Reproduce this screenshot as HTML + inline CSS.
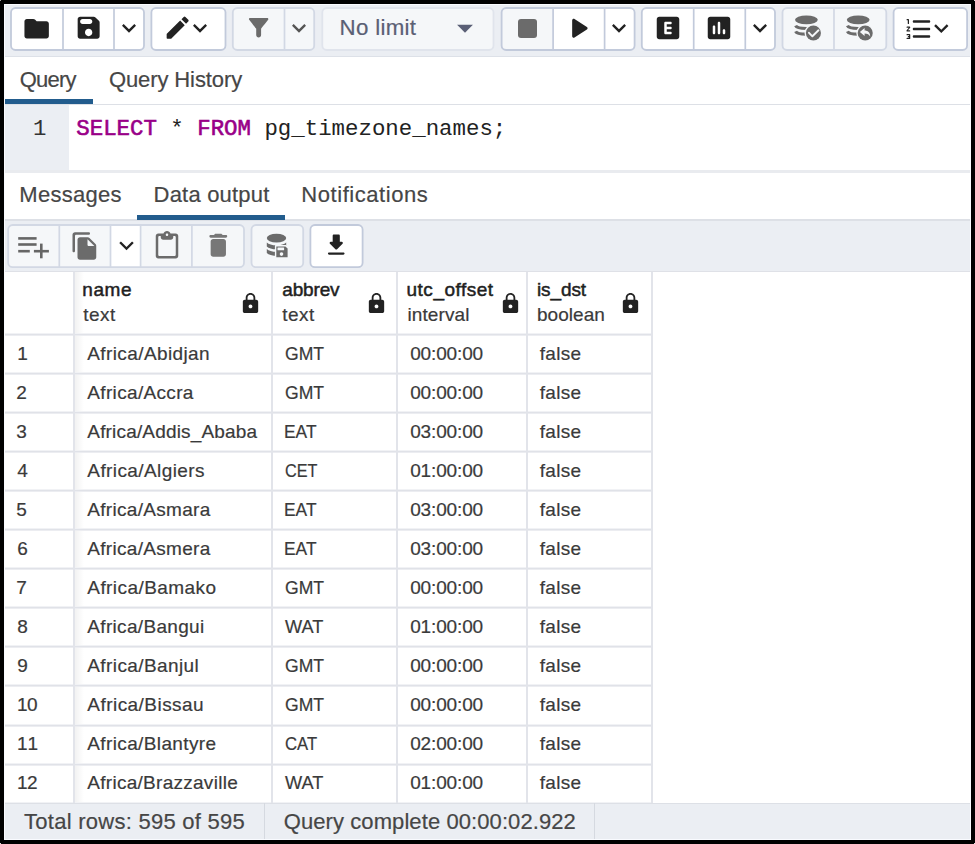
<!DOCTYPE html>
<html lang="en">
<head>
<meta charset="utf-8">
<title>Query Tool</title>
<style>
*{box-sizing:border-box;margin:0;padding:0}
html,body{width:975px;height:844px;overflow:hidden;background:#000}
body{position:relative;font-family:"Liberation Sans",sans-serif;color:#222}
#app{position:absolute;left:4px;top:4px;width:967px;height:836px;background:#fff;overflow:hidden}
.abs{position:absolute}
.bar{position:absolute;left:0;width:967px;background:#ebeef3}
svg{position:absolute;overflow:visible}
.t{position:absolute;white-space:nowrap;line-height:1;-webkit-text-stroke:.2px currentColor}
.code{font-family:"Liberation Mono",monospace;font-size:22.400px;-webkit-text-stroke:0}
.kw{color:#908;-webkit-text-stroke:.6px #908}
/* table */
.vl{position:absolute;width:2px;background:#e2e4ea;top:268px;height:531px}
.hl{position:absolute;height:3px;background:linear-gradient(#f1f2f5 0 33.3%,#e0e2e8 33.3% 66.7%,#ecedf1 66.7% 100%);left:0;width:649px}
.sh{position:absolute;left:71px;top:268px;width:9px;height:531px;background:linear-gradient(to right,rgba(0,0,0,.05),rgba(0,0,0,0))}
</style>
</head>
<body>
<div id="app">

<!-- main toolbar -->
<div class="bar" id="tb1" style="top:0;height:53px;border-bottom:1px solid #dde1e8"></div>
<svg style="left:-4px;top:-4px" width="975" height="300"><clipPath id="c110_8"><rect x="11" y="8" width="133" height="42" rx="4.500"/></clipPath><rect x="11" y="8" width="133" height="42" rx="4.500" fill="#fff"/><line x1="63" y1="8" x2="63" y2="50" stroke="#c2cadb" stroke-width="1.700"/><line x1="114" y1="8" x2="114" y2="50" stroke="#c2cadb" stroke-width="1.700"/><rect x="11" y="8" width="133" height="42" rx="4.500" fill="none" stroke="#c2cadb" stroke-width="1.800"/></svg>
<svg style="left:17.95px;top:9.65px" width="29.3" height="29.3" viewBox="0 0 24 24" fill="#222"><path d="M10.59 4.59C10.21 4.21 9.7 4 9.17 4H4c-1.1 0-1.99.9-1.99 2L2 18c0 1.1.9 2 2 2h16c1.1 0 2-.9 2-2V8c0-1.1-.9-2-2-2h-8l-1.41-1.41z"/></svg>
<svg style="left:69.65px;top:9.45px" width="29.3" height="29.3" viewBox="0 0 24 24" fill="#222"><path d="M17.59 3.59c-.38-.38-.89-.59-1.42-.59H5c-1.11 0-2 .9-2 2v14c0 1.1.9 2 2 2h14c1.1 0 2-.9 2-2V7.83c0-.53-.21-1.04-.59-1.41l-2.82-2.83zM12 19c-1.66 0-3-1.34-3-3s1.34-3 3-3 3 1.34 3 3-1.34 3-3 3zm1-10H7c-1.1 0-2-.9-2-2s.9-2 2-2h6c1.1 0 2 .9 2 2s-.9 2-2 2z"/></svg>
<svg style="left:111.3px;top:9.95px" width="28" height="28" viewBox="0 0 24 24" fill="#222"><path d="M7.41 8.59 12 13.17l4.59-4.58L18 10l-6 6-6-6 1.41-1.41z"/></svg>
<svg style="left:-4px;top:-4px" width="975" height="300"><clipPath id="c1514_8"><rect x="151.4" y="8" width="74.1" height="42" rx="4.500"/></clipPath><rect x="151.4" y="8" width="74.1" height="42" rx="4.500" fill="#fff"/><rect x="151.4" y="8" width="74.1" height="42" rx="4.500" fill="none" stroke="#c2cadb" stroke-width="1.800"/></svg>
<svg style="left:158.65px;top:9.45px" width="29.3" height="29.3" viewBox="0 0 24 24" fill="#222"><path d="M3 17.46v3.04c0 .28.22.5.5.5h3.04c.13 0 .26-.05.35-.15L17.81 9.94l-3.75-3.75L3.15 17.1c-.1.1-.15.22-.15.36zM20.71 7.04c.39-.39.39-1.02 0-1.41l-2.34-2.34a.9959.9959 0 0 0-1.41 0l-1.83 1.83 3.75 3.75 1.83-1.83z"/></svg>
<svg style="left:181.5px;top:9.95px" width="28" height="28" viewBox="0 0 24 24" fill="#222"><path d="M7.41 8.59 12 13.17l4.59-4.58L18 10l-6 6-6-6 1.41-1.41z"/></svg>
<svg style="left:-4px;top:-4px" width="975" height="300"><clipPath id="c2328_8"><rect x="232.8" y="8" width="81.4" height="42" rx="4.500"/></clipPath><rect x="232.8" y="8" width="81.4" height="42" rx="4.500" fill="#f5f7f9"/><line x1="284.5" y1="8" x2="284.5" y2="50" stroke="#d2d8e4" stroke-width="1.700"/><rect x="232.8" y="8" width="81.4" height="42" rx="4.500" fill="none" stroke="#d2d8e4" stroke-width="1.800"/></svg>
<svg style="left:240.15px;top:8.85px" width="29.3" height="29.3" viewBox="0 0 24 24" fill="#6b6b6b"><path d="M4.25 5.61C6.57 8.59 10 13 10 13v5c0 1.1.9 2 2 2s2-.9 2-2v-5s3.43-4.41 5.75-7.39c.51-.66.04-1.61-.8-1.61H5.04c-.83 0-1.3.95-.79 1.61z"/></svg>
<svg style="left:281.0px;top:9.95px" width="28" height="28" viewBox="0 0 24 24" fill="#555"><path d="M7.41 8.59 12 13.17l4.59-4.58L18 10l-6 6-6-6 1.41-1.41z"/></svg>
<svg style="left:-4px;top:-4px" width="975" height="300"><clipPath id="c3223_8"><rect x="322.3" y="8" width="171.2" height="42" rx="4.500"/></clipPath><rect x="322.3" y="8" width="171.2" height="42" rx="4.500" fill="#f5f7f9"/><rect x="322.3" y="8" width="171.2" height="42" rx="4.500" fill="none" stroke="#e0e4ec" stroke-width="1.800"/></svg>
<svg style="left:441.9px;top:5.4px" width="38" height="38" viewBox="0 0 24 24" fill="#5a5f76"><path d="M7 10l5 5 5-5z"/></svg>
<svg style="left:-4px;top:-4px" width="975" height="300"><clipPath id="c5016_8"><rect x="501.6" y="8" width="133.0" height="42" rx="4.500"/></clipPath><rect x="501.6" y="8" width="133.0" height="42" rx="4.500" fill="#fff"/><rect x="501.6" y="8" width="51.5" height="42" fill="#f5f7f9" clip-path="url(#c5016_8)"/><line x1="553.1" y1="8" x2="553.1" y2="50" stroke="#c2cadb" stroke-width="1.700"/><line x1="604.6" y1="8" x2="604.6" y2="50" stroke="#c2cadb" stroke-width="1.700"/><rect x="501.6" y="8" width="133.0" height="42" rx="4.500" fill="none" stroke="#c2cadb" stroke-width="1.800"/></svg>
<div class="abs" style="left:514.2px;top:15.3px;width:18.6px;height:18.6px;border-radius:3px;background:#6b6b6b"></div>
<svg style="left:556.05px;top:6.25px" width="36.5" height="36.5" viewBox="0 0 24 24" fill="#222"><path d="M8 6.82v10.36c0 .79.87 1.27 1.54.84l8.14-5.18c.62-.39.62-1.29 0-1.69L9.54 5.98C8.87 5.55 8 6.03 8 6.82z"/></svg>
<svg style="left:601.4px;top:9.95px" width="28" height="28" viewBox="0 0 24 24" fill="#222"><path d="M7.41 8.59 12 13.17l4.59-4.58L18 10l-6 6-6-6 1.41-1.41z"/></svg>
<svg style="left:-4px;top:-4px" width="975" height="300"><clipPath id="c6418_8"><rect x="641.8" y="8" width="133.2" height="42" rx="4.500"/></clipPath><rect x="641.8" y="8" width="133.2" height="42" rx="4.500" fill="#fff"/><line x1="693.7" y1="8" x2="693.7" y2="50" stroke="#c2cadb" stroke-width="1.700"/><line x1="745.3" y1="8" x2="745.3" y2="50" stroke="#c2cadb" stroke-width="1.700"/><rect x="641.8" y="8" width="133.2" height="42" rx="4.500" fill="none" stroke="#c2cadb" stroke-width="1.800"/></svg>
<svg style="left:648.7px;top:9.3px" width="30" height="30" viewBox="0 0 24 24" fill="#222"><path d="M19 3H5c-1.1 0-2 .9-2 2v14c0 1.1.9 2 2 2h14c1.1 0 2-.9 2-2V5c0-1.1-.9-2-2-2zm-5 6h-3v2h3c.55 0 1 .45 1 1s-.45 1-1 1h-3v2h3c.55 0 1 .45 1 1s-.45 1-1 1h-4c-.55 0-1-.45-1-1V8c0-.55.45-1 1-1h4c.55 0 1 .45 1 1s-.45 1-1 1z"/></svg>
<svg style="left:700.3px;top:9.3px" width="30" height="30" viewBox="0 0 24 24" fill="#222"><path d="M19 3H5c-1.1 0-2 .9-2 2v14c0 1.1.9 2 2 2h14c1.1 0 2-.9 2-2V5c0-1.1-.9-2-2-2zM8 17c-.55 0-1-.45-1-1v-5c0-.55.45-1 1-1s1 .45 1 1v5c0 .55-.45 1-1 1zm4 0c-.55 0-1-.45-1-1V8c0-.55.45-1 1-1s1 .45 1 1v8c0 .55-.45 1-1 1zm4 0c-.55 0-1-.45-1-1v-2c0-.55.45-1 1-1s1 .45 1 1v2c0 .55-.45 1-1 1z"/></svg>
<svg style="left:742.2px;top:9.95px" width="28" height="28" viewBox="0 0 24 24" fill="#222"><path d="M7.41 8.59 12 13.17l4.59-4.58L18 10l-6 6-6-6 1.41-1.41z"/></svg>
<svg style="left:-4px;top:-4px" width="975" height="300"><clipPath id="c7825_8"><rect x="782.5" y="8" width="103.8" height="42" rx="4.500"/></clipPath><rect x="782.5" y="8" width="103.8" height="42" rx="4.500" fill="#f5f7f9"/><line x1="834" y1="8" x2="834" y2="50" stroke="#d2d8e4" stroke-width="1.700"/><rect x="782.5" y="8" width="103.8" height="42" rx="4.500" fill="none" stroke="#d2d8e4" stroke-width="1.800"/></svg>
<svg style="left:-4px;top:-4px" width="975" height="300"><ellipse cx="806.4" cy="19.850" rx="11.400" ry="4.450" fill="#6b6b6b"/><path d="M795.6 25.600A10.900 3.300 0 0 0 817.2 25.600" fill="none" stroke="#6b6b6b" stroke-width="3.100"/><path d="M795.6 31.300A10.900 3.300 0 0 0 817.2 31.300" fill="none" stroke="#6b6b6b" stroke-width="3.100"/><circle cx="813.4" cy="33" r="8.900" fill="#f5f7f9"/><circle cx="813.4" cy="33" r="7.550" fill="#6b6b6b"/><path d="M809 32.800l3.400 3.500 6.100-6" fill="none" stroke="#f5f7f9" stroke-width="1.900" stroke-linecap="round" stroke-linejoin="round"/></svg>
<svg style="left:-4px;top:-4px" width="975" height="300"><ellipse cx="858.1999999999999" cy="19.850" rx="11.400" ry="4.450" fill="#6b6b6b"/><path d="M847.4 25.600A10.900 3.300 0 0 0 869.0 25.600" fill="none" stroke="#6b6b6b" stroke-width="3.100"/><path d="M847.4 31.300A10.900 3.300 0 0 0 869.0 31.300" fill="none" stroke="#6b6b6b" stroke-width="3.100"/><circle cx="865.2" cy="33" r="8.900" fill="#f5f7f9"/><circle cx="865.2" cy="33" r="7.550" fill="#6b6b6b"/><path transform="translate(865.200 33)" d="M-5.300-1L-.6-4.900V-2.400C2.600-2.400 5-.4 5 3.700 4 1.400 2.200.5-.6.500V2.900Z" fill="#f5f7f9"/></svg>
<svg style="left:-4px;top:-4px" width="975" height="300"><clipPath id="c8936_8"><rect x="893.6" y="8" width="73.5" height="42" rx="4.500"/></clipPath><rect x="893.6" y="8" width="73.5" height="42" rx="4.500" fill="#fff"/><rect x="893.6" y="8" width="73.5" height="42" rx="4.500" fill="none" stroke="#c2cadb" stroke-width="1.800"/></svg>
<svg style="left:900.4px;top:9.55px" width="30" height="30" viewBox="0 0 24 24" fill="#222"><path d="M8 7h12c.55 0 1-.45 1-1s-.45-1-1-1H8c-.55 0-1 .45-1 1s.45 1 1 1zm12 10H8c-.55 0-1 .45-1 1s.45 1 1 1h12c.55 0 1-.45 1-1s-.45-1-1-1zm0-6H8c-.55 0-1 .45-1 1s.45 1 1 1h12c.55 0 1-.45 1-1s-.45-1-1-1zM4.5 16h-2c-.28 0-.5.22-.5.5s.22.5.5.5H4v.5h-.5c-.28 0-.5.22-.5.5s.22.5.5.5H4v.5H2.5c-.28 0-.5.22-.5.5s.22.5.5.5h2c.28 0 .5-.22.5-.5v-3c0-.28-.22-.5-.5-.5zm-2-11H3v2.5c0 .28.22.5.5.5s.5-.22.5-.5v-3c0-.28-.22-.5-.5-.5h-1c-.28 0-.5.22-.5.5s.22.5.5.5zm2 5h-2c-.28 0-.5.22-.5.5s.22.5.5.5h1.3l-1.68 1.96c-.08.09-.12.21-.12.32v.22c0 .28.22.5.5.5h2c.28 0 .5-.22.5-.5s-.22-.5-.5-.5H3.2l1.68-1.96c.08-.09.12-.21.12-.32v-.22c0-.28-.22-.5-.5-.5z"/></svg>
<svg style="left:922.9px;top:10.0px" width="28.6" height="28.6" viewBox="0 0 24 24" fill="#222"><path d="M7.41 8.59 12 13.17l4.59-4.58L18 10l-6 6-6-6 1.41-1.41z"/></svg>

<!-- query tabs -->
<div class="abs" style="left:0;top:100px;width:967px;height:1px;background:#dde0e6"></div>
<div class="abs" style="left:0;top:95px;width:89px;height:5px;background:#225c8d"></div>

<!-- editor -->
<div class="abs" style="left:0;top:101px;width:65px;height:65px;background:#ebeef3"></div>
<div class="t code" style="left:29px;top:114px;color:#333">1</div>
<div class="t code" style="left:72.300px;top:114px;color:#222"><span class="kw">SELECT</span> * <span class="kw">FROM</span> pg_timezone_names;</div>
<div class="abs" style="left:0;top:166px;width:967px;height:3px;background:#e9ebef"></div>

<!-- result tabs -->

<!-- data toolbar -->
<div class="bar" id="tb2" style="top:215px;height:53px;border-top:2px solid #dde0e6;border-bottom:1px solid #dfe1e7"></div>
<div class="abs" style="left:133px;top:211px;width:148px;height:5px;background:#225c8d"></div>
<svg style="left:-4px;top:-4px" width="975" height="300"><clipPath id="c82_225"><rect x="8.2" y="225" width="235.8" height="42.2" rx="4.500"/></clipPath><rect x="8.2" y="225" width="235.8" height="42.2" rx="4.500" fill="#f5f7f9"/><rect x="110.5" y="225" width="30.1" height="42.2" fill="#fff" clip-path="url(#c82_225)"/><line x1="59.3" y1="225" x2="59.3" y2="267.2" stroke="#d2d8e4" stroke-width="1.700"/><line x1="110.5" y1="225" x2="110.5" y2="267.2" stroke="#d2d8e4" stroke-width="1.700"/><line x1="140.6" y1="225" x2="140.6" y2="267.2" stroke="#d2d8e4" stroke-width="1.700"/><line x1="191.9" y1="225" x2="191.9" y2="267.2" stroke="#d2d8e4" stroke-width="1.700"/><rect x="8.2" y="225" width="235.8" height="42.2" rx="4.500" fill="none" stroke="#d2d8e4" stroke-width="1.800"/></svg>
<svg style="left:0;top:0" width="60" height="280"><line x1="14.2" y1="234.4" x2="32.6" y2="234.4" stroke="#666" stroke-width="2.6"/><line x1="14.2" y1="240.5" x2="32.6" y2="240.5" stroke="#666" stroke-width="2.6"/><line x1="14.2" y1="247.2" x2="25.8" y2="247.2" stroke="#666" stroke-width="2.6"/><line x1="37.3" y1="239.6" x2="37.3" y2="254.3" stroke="#666" stroke-width="2.6"/><line x1="29.9" y1="247.2" x2="44.9" y2="247.2" stroke="#666" stroke-width="2.6"/></svg>
<svg style="left:66.4px;top:226.5px" width="30" height="30" viewBox="0 0 24 24" fill="#6b6b6b"><path d="M15 1H4c-1.1 0-2 .9-2 2v13c0 .55.45 1 1 1s1-.45 1-1V4c0-.55.45-1 1-1h10c.55 0 1-.45 1-1s-.45-1-1-1zm.59 4.59 4.83 4.83c.37.37.58.88.58 1.41V21c0 1.1-.9 2-2 2H7.99C6.89 23 6 22.1 6 21l.01-14c0-1.1.89-2 1.99-2h6.17c.53 0 1.04.21 1.42.59zM15 12h4.5L14 6.5V11c0 .55.45 1 1 1z"/></svg>
<svg style="left:107.6px;top:227.2px" width="29" height="29" viewBox="0 0 24 24" fill="#222"><path d="M7.41 8.59 12 13.17l4.59-4.58L18 10l-6 6-6-6 1.41-1.41z"/></svg>
<svg style="left:147.9px;top:226.5px" width="30" height="30" viewBox="0 0 24 24" fill="#6b6b6b"><path d="M19 2h-4.18C14.4.84 13.3 0 12 0S9.6.84 9.18 2H5c-1.1 0-2 .9-2 2v16c0 1.1.9 2 2 2h14c1.1 0 2-.9 2-2V4c0-1.1-.9-2-2-2zm-7 0c.55 0 1 .45 1 1s-.45 1-1 1-1-.45-1-1 .45-1 1-1zm6 18H6c-.55 0-1-.45-1-1V5c0-.55.45-1 1-1h1v1c0 1.1.9 2 2 2h6c1.1 0 2-.9 2-2V4h1c.55 0 1 .45 1 1v14c0 .55-.45 1-1 1z"/></svg>
<svg style="left:199.1px;top:226.0px" width="30.6" height="30.6" viewBox="0 0 24 24" fill="#777"><path d="M6 19c0 1.1.9 2 2 2h8c1.1 0 2-.9 2-2V9c0-1.1-.9-2-2-2H8c-1.1 0-2 .9-2 2v10zM18 4h-2.5l-.71-.71c-.18-.18-.44-.29-.7-.29H9.910c-.26 0-.52.11-.7.29L8.500 4H6c-.55 0-1 .45-1 1s.45 1 1 1h12c.55 0 1-.45 1-1s-.45-1-1-1z"/></svg>
<svg style="left:-4px;top:-4px" width="975" height="300"><clipPath id="c2515_225"><rect x="251.5" y="225" width="51.7" height="42.2" rx="4.500"/></clipPath><rect x="251.5" y="225" width="51.7" height="42.2" rx="4.500" fill="#f5f7f9"/><rect x="251.5" y="225" width="51.7" height="42.2" rx="4.500" fill="none" stroke="#d2d8e4" stroke-width="1.800"/></svg>
<svg style="left:-4px;top:-4px" width="975" height="300"><ellipse cx="276.500" cy="238.100" rx="9.700" ry="4.300" fill="#6b6b6b"/><path d="M266.800 242.400c1.800 1.900 5.400 2.800 9.700 2.800s7.900-.9 9.700-2.800v4.100c-1.800 1.900-5.400 2.800-9.700 2.800s-7.900-.9-9.700-2.800z" fill="#6b6b6b"/><path d="M266.800 248.900c1.800 1.900 5.400 2.800 9.700 2.800s7.900-.9 9.700-2.800v4.100c-1.800 1.900-5.400 2.800-9.700 2.800s-7.900-.9-9.700-2.800z" fill="#6b6b6b"/><path d="M275.600 245.700h10.100l2.600 2.600v9.700h-12.700z" fill="#6b6b6b" stroke="#f5f7f9" stroke-width="1.400" stroke-linejoin="round"/><rect x="277.500" y="247.500" width="6.600" height="2.700" rx=".5" fill="#f5f7f9"/><circle cx="281.500" cy="254.100" r="1.800" fill="#f5f7f9"/></svg>
<svg style="left:-4px;top:-4px" width="975" height="300"><clipPath id="c3104_225"><rect x="310.4" y="225" width="52.2" height="42.2" rx="4.500"/></clipPath><rect x="310.4" y="225" width="52.2" height="42.2" rx="4.500" fill="#fff"/><rect x="310.4" y="225" width="52.2" height="42.2" rx="4.500" fill="none" stroke="#c2cadb" stroke-width="1.800"/></svg>
<svg style="left:318.45px;top:226.85px" width="28.5" height="28.5" viewBox="0 0 24 24" fill="#222"><path d="M16.59 9H15V4c0-.55-.45-1-1-1h-4c-.55 0-1 .45-1 1v5H7.41c-.89 0-1.34 1.08-.71 1.71l4.59 4.59c.39.39 1.02.39 1.41 0l4.59-4.59c.63-.63.19-1.71-.7-1.71zM5 19c0 .55.45 1 1 1h12c.55 0 1-.45 1-1s-.45-1-1-1H6c-.55 0-1 .45-1 1z"/></svg>

<!-- table -->
<div class="sh"></div>
<div class="hl" style="top:329px"></div>
<div class="hl" style="top:368px"></div>
<div class="hl" style="top:407px"></div>
<div class="hl" style="top:446px"></div>
<div class="hl" style="top:485px"></div>
<div class="hl" style="top:524px"></div>
<div class="hl" style="top:563px"></div>
<div class="hl" style="top:602px"></div>
<div class="hl" style="top:641px"></div>
<div class="hl" style="top:680px"></div>
<div class="hl" style="top:720px"></div>
<div class="hl" style="top:759px"></div>
<div class="hl" style="top:798px"></div>
<div class="vl" style="left:69px"></div>
<div class="vl" style="left:267px"></div>
<div class="vl" style="left:392px"></div>
<div class="vl" style="left:522px"></div>
<div class="vl" style="left:647px"></div>
<svg style="left:235.25px;top:288.3px" width="23" height="23" viewBox="0 0 24 24" fill="#222"><path d="M18 8h-1V6c0-2.76-2.24-5-5-5S7 3.240 7 6v2H6c-1.1 0-2 .9-2 2v10c0 1.1.9 2 2 2h12c1.100 0 2-.9 2-2V10c0-1.100-.9-2-2-2zm-6 9c-1.100 0-2-.9-2-2s.9-2 2-2 2 .9 2 2-.9 2-2 2zm3.100-9H8.900V6c0-1.710 1.390-3.100 3.100-3.100 1.710 0 3.100 1.390 3.100 3.100v2z"/></svg>
<svg style="left:360.5px;top:288.3px" width="23" height="23" viewBox="0 0 24 24" fill="#222"><path d="M18 8h-1V6c0-2.76-2.24-5-5-5S7 3.240 7 6v2H6c-1.1 0-2 .9-2 2v10c0 1.1.9 2 2 2h12c1.100 0 2-.9 2-2V10c0-1.100-.9-2-2-2zm-6 9c-1.100 0-2-.9-2-2s.9-2 2-2 2 .9 2 2-.9 2-2 2zm3.100-9H8.900V6c0-1.710 1.390-3.100 3.100-3.100 1.710 0 3.100 1.390 3.100 3.100v2z"/></svg>
<svg style="left:494.7px;top:288.3px" width="23" height="23" viewBox="0 0 24 24" fill="#222"><path d="M18 8h-1V6c0-2.76-2.24-5-5-5S7 3.240 7 6v2H6c-1.1 0-2 .9-2 2v10c0 1.1.9 2 2 2h12c1.100 0 2-.9 2-2V10c0-1.100-.9-2-2-2zm-6 9c-1.100 0-2-.9-2-2s.9-2 2-2 2 .9 2 2-.9 2-2 2zm3.100-9H8.900V6c0-1.710 1.390-3.100 3.100-3.100 1.710 0 3.100 1.390 3.100 3.100v2z"/></svg>
<svg style="left:615.0px;top:288.3px" width="23" height="23" viewBox="0 0 24 24" fill="#222"><path d="M18 8h-1V6c0-2.76-2.24-5-5-5S7 3.240 7 6v2H6c-1.1 0-2 .9-2 2v10c0 1.1.9 2 2 2h12c1.100 0 2-.9 2-2V10c0-1.100-.9-2-2-2zm-6 9c-1.100 0-2-.9-2-2s.9-2 2-2 2 .9 2 2-.9 2-2 2zm3.100-9H8.900V6c0-1.710 1.390-3.100 3.100-3.100 1.710 0 3.100 1.390 3.100 3.100v2z"/></svg>

<!-- status bar -->
<div class="bar" style="top:799px;height:37px;border-top:1px solid #dde0e6"></div>
<div class="abs" style="left:260px;top:799px;width:1px;height:37px;background:#d5d9e0"></div>
<div class="abs" style="left:590px;top:799px;width:1px;height:37px;background:#d5d9e0"></div>
<div class="t" style="left:15.8px;top:65px;font-size:22px;color:#464646;letter-spacing:-0.825px">Query</div>
<div class="t" style="left:104.9px;top:65px;font-size:22px;color:#464646;letter-spacing:-0.1px">Query History</div>
<div class="t" style="left:15.3px;top:180px;font-size:22px;color:#464646;letter-spacing:0.271px">Messages</div>
<div class="t" style="left:149.6px;top:180px;font-size:22px;color:#464646;letter-spacing:0.19px">Data output</div>
<div class="t" style="left:297.3px;top:180px;font-size:22px;color:#464646;letter-spacing:0.558px">Notifications</div>
<div class="t" style="left:20.0px;top:807px;font-size:22px;color:#464646;letter-spacing:0.267px">Total rows: 595 of 595</div>
<div class="t" style="left:279.7px;top:807px;font-size:22px;color:#464646;letter-spacing:0.088px">Query complete 00:00:02.922</div>
<div class="t" style="left:335.6px;top:13px;font-size:22.3px;color:#5b6074;letter-spacing:0.3px">No limit</div>
<div class="t" style="left:78.3px;top:276px;font-size:19px;color:#1f1f1f;-webkit-text-stroke:.5px #1f1f1f;letter-spacing:0.567px">name</div>
<div class="t" style="left:278.3px;top:276px;font-size:19px;color:#1f1f1f;-webkit-text-stroke:.5px #1f1f1f;letter-spacing:-0.16px">abbrev</div>
<div class="t" style="left:402.5px;top:276px;font-size:19px;color:#1f1f1f;-webkit-text-stroke:.5px #1f1f1f;letter-spacing:0.511px">utc_offset</div>
<div class="t" style="left:532.9px;top:276px;font-size:19px;color:#1f1f1f;-webkit-text-stroke:.5px #1f1f1f;letter-spacing:-0.08px">is_dst</div>
<div class="t" style="left:79.3px;top:301px;font-size:19px;color:#3a3a3a;letter-spacing:0.433px">text</div>
<div class="t" style="left:278.3px;top:301px;font-size:19px;color:#3a3a3a;letter-spacing:0.433px">text</div>
<div class="t" style="left:403.5px;top:301px;font-size:19px;color:#3a3a3a;letter-spacing:0.086px">interval</div>
<div class="t" style="left:532.9px;top:301px;font-size:19px;color:#3a3a3a;letter-spacing:0.067px">boolean</div>
<div class="t" style="left:13.2px;top:340px;font-size:19px;color:#3a3a3a">1</div>
<div class="t" style="left:83.3px;top:340px;font-size:19px;color:#3a3a3a;letter-spacing:0.392px">Africa/Abidjan</div>
<div class="t" style="left:281.3px;top:340px;font-size:19px;color:#3a3a3a;transform:scaleX(0.9262);transform-origin:0 0">GMT</div>
<div class="t" style="left:406.2px;top:340px;font-size:19px;color:#3a3a3a;letter-spacing:-0.143px">00:00:00</div>
<div class="t" style="left:535.8px;top:340px;font-size:19px;color:#3a3a3a;letter-spacing:0.275px">false</div>
<div class="t" style="left:12.3px;top:379px;font-size:19px;color:#3a3a3a">2</div>
<div class="t" style="left:83.3px;top:379px;font-size:19px;color:#3a3a3a;letter-spacing:0.336px">Africa/Accra</div>
<div class="t" style="left:281.3px;top:379px;font-size:19px;color:#3a3a3a;transform:scaleX(0.9262);transform-origin:0 0">GMT</div>
<div class="t" style="left:406.2px;top:379px;font-size:19px;color:#3a3a3a;letter-spacing:-0.143px">00:00:00</div>
<div class="t" style="left:535.8px;top:379px;font-size:19px;color:#3a3a3a;letter-spacing:0.275px">false</div>
<div class="t" style="left:12.3px;top:418px;font-size:19px;color:#3a3a3a">3</div>
<div class="t" style="left:83.3px;top:418px;font-size:19px;color:#3a3a3a;letter-spacing:0.171px">Africa/Addis_Ababa</div>
<div class="t" style="left:280.39px;top:418px;font-size:19px;color:#3a3a3a;transform:scaleX(0.9143);transform-origin:0 0">EAT</div>
<div class="t" style="left:406.2px;top:418px;font-size:19px;color:#3a3a3a;letter-spacing:-0.143px">03:00:00</div>
<div class="t" style="left:535.8px;top:418px;font-size:19px;color:#3a3a3a;letter-spacing:0.275px">false</div>
<div class="t" style="left:13.3px;top:457px;font-size:19px;color:#3a3a3a">4</div>
<div class="t" style="left:83.3px;top:457px;font-size:19px;color:#3a3a3a;letter-spacing:0.408px">Africa/Algiers</div>
<div class="t" style="left:281.3px;top:457px;font-size:19px;color:#3a3a3a;transform:scaleX(0.8526);transform-origin:0 0">CET</div>
<div class="t" style="left:406.2px;top:457px;font-size:19px;color:#3a3a3a;letter-spacing:-0.143px">01:00:00</div>
<div class="t" style="left:535.8px;top:457px;font-size:19px;color:#3a3a3a;letter-spacing:0.275px">false</div>
<div class="t" style="left:12.3px;top:496px;font-size:19px;color:#3a3a3a">5</div>
<div class="t" style="left:83.3px;top:496px;font-size:19px;color:#3a3a3a;letter-spacing:0.308px">Africa/Asmara</div>
<div class="t" style="left:280.39px;top:496px;font-size:19px;color:#3a3a3a;transform:scaleX(0.9143);transform-origin:0 0">EAT</div>
<div class="t" style="left:406.2px;top:496px;font-size:19px;color:#3a3a3a;letter-spacing:-0.143px">03:00:00</div>
<div class="t" style="left:535.8px;top:496px;font-size:19px;color:#3a3a3a;letter-spacing:0.275px">false</div>
<div class="t" style="left:13.3px;top:535px;font-size:19px;color:#3a3a3a">6</div>
<div class="t" style="left:83.3px;top:535px;font-size:19px;color:#3a3a3a;letter-spacing:0.308px">Africa/Asmera</div>
<div class="t" style="left:280.39px;top:535px;font-size:19px;color:#3a3a3a;transform:scaleX(0.9143);transform-origin:0 0">EAT</div>
<div class="t" style="left:406.2px;top:535px;font-size:19px;color:#3a3a3a;letter-spacing:-0.143px">03:00:00</div>
<div class="t" style="left:535.8px;top:535px;font-size:19px;color:#3a3a3a;letter-spacing:0.275px">false</div>
<div class="t" style="left:12.3px;top:574px;font-size:19px;color:#3a3a3a">7</div>
<div class="t" style="left:83.3px;top:574px;font-size:19px;color:#3a3a3a;letter-spacing:0.433px">Africa/Bamako</div>
<div class="t" style="left:281.3px;top:574px;font-size:19px;color:#3a3a3a;transform:scaleX(0.9262);transform-origin:0 0">GMT</div>
<div class="t" style="left:406.2px;top:574px;font-size:19px;color:#3a3a3a;letter-spacing:-0.143px">00:00:00</div>
<div class="t" style="left:535.8px;top:574px;font-size:19px;color:#3a3a3a;letter-spacing:0.275px">false</div>
<div class="t" style="left:13.3px;top:613px;font-size:19px;color:#3a3a3a">8</div>
<div class="t" style="left:83.3px;top:613px;font-size:19px;color:#3a3a3a;letter-spacing:0.325px">Africa/Bangui</div>
<div class="t" style="left:281.3px;top:613px;font-size:19px;color:#3a3a3a;transform:scaleX(0.9575);transform-origin:0 0">WAT</div>
<div class="t" style="left:406.2px;top:613px;font-size:19px;color:#3a3a3a;letter-spacing:-0.143px">01:00:00</div>
<div class="t" style="left:535.8px;top:613px;font-size:19px;color:#3a3a3a;letter-spacing:0.275px">false</div>
<div class="t" style="left:13.3px;top:652px;font-size:19px;color:#3a3a3a">9</div>
<div class="t" style="left:83.3px;top:652px;font-size:19px;color:#3a3a3a;letter-spacing:0.4px">Africa/Banjul</div>
<div class="t" style="left:281.3px;top:652px;font-size:19px;color:#3a3a3a;transform:scaleX(0.9262);transform-origin:0 0">GMT</div>
<div class="t" style="left:406.2px;top:652px;font-size:19px;color:#3a3a3a;letter-spacing:-0.143px">00:00:00</div>
<div class="t" style="left:535.8px;top:652px;font-size:19px;color:#3a3a3a;letter-spacing:0.275px">false</div>
<div class="t" style="left:13.0px;top:691px;font-size:19px;color:#3a3a3a;letter-spacing:-0.6px">10</div>
<div class="t" style="left:83.3px;top:691px;font-size:19px;color:#3a3a3a;letter-spacing:0.458px">Africa/Bissau</div>
<div class="t" style="left:281.3px;top:691px;font-size:19px;color:#3a3a3a;transform:scaleX(0.9262);transform-origin:0 0">GMT</div>
<div class="t" style="left:406.2px;top:691px;font-size:19px;color:#3a3a3a;letter-spacing:-0.143px">00:00:00</div>
<div class="t" style="left:535.8px;top:691px;font-size:19px;color:#3a3a3a;letter-spacing:0.275px">false</div>
<div class="t" style="left:13.0px;top:730px;font-size:19px;color:#3a3a3a;letter-spacing:1.4px">11</div>
<div class="t" style="left:83.3px;top:730px;font-size:19px;color:#3a3a3a;letter-spacing:0.371px">Africa/Blantyre</div>
<div class="t" style="left:281.3px;top:730px;font-size:19px;color:#3a3a3a;transform:scaleX(0.8757);transform-origin:0 0">CAT</div>
<div class="t" style="left:406.2px;top:730px;font-size:19px;color:#3a3a3a;letter-spacing:-0.143px">02:00:00</div>
<div class="t" style="left:535.8px;top:730px;font-size:19px;color:#3a3a3a;letter-spacing:0.275px">false</div>
<div class="t" style="left:13.0px;top:769px;font-size:19px;color:#3a3a3a;letter-spacing:-0.6px">12</div>
<div class="t" style="left:83.3px;top:769px;font-size:19px;color:#3a3a3a;letter-spacing:0.276px">Africa/Brazzaville</div>
<div class="t" style="left:281.3px;top:769px;font-size:19px;color:#3a3a3a;transform:scaleX(0.9575);transform-origin:0 0">WAT</div>
<div class="t" style="left:406.2px;top:769px;font-size:19px;color:#3a3a3a;letter-spacing:-0.143px">01:00:00</div>
<div class="t" style="left:535.8px;top:769px;font-size:19px;color:#3a3a3a;letter-spacing:0.275px">false</div>
<div class="abs" style="left:0;top:0;width:967px;height:836px;box-shadow:inset 0 0 0 1px #f9fbff"></div>

</div>
<div class="abs" style="left:0;top:0;width:1px;height:1px;background:#ddd;border-radius:0 0 1px 0"></div>
<div class="abs" style="left:974px;top:0;width:1px;height:1px;background:#ddd"></div>
<div class="abs" style="left:0;top:843px;width:1px;height:1px;background:#ddd"></div>
<div class="abs" style="left:974px;top:843px;width:1px;height:1px;background:#ddd"></div>
</body>
</html>
